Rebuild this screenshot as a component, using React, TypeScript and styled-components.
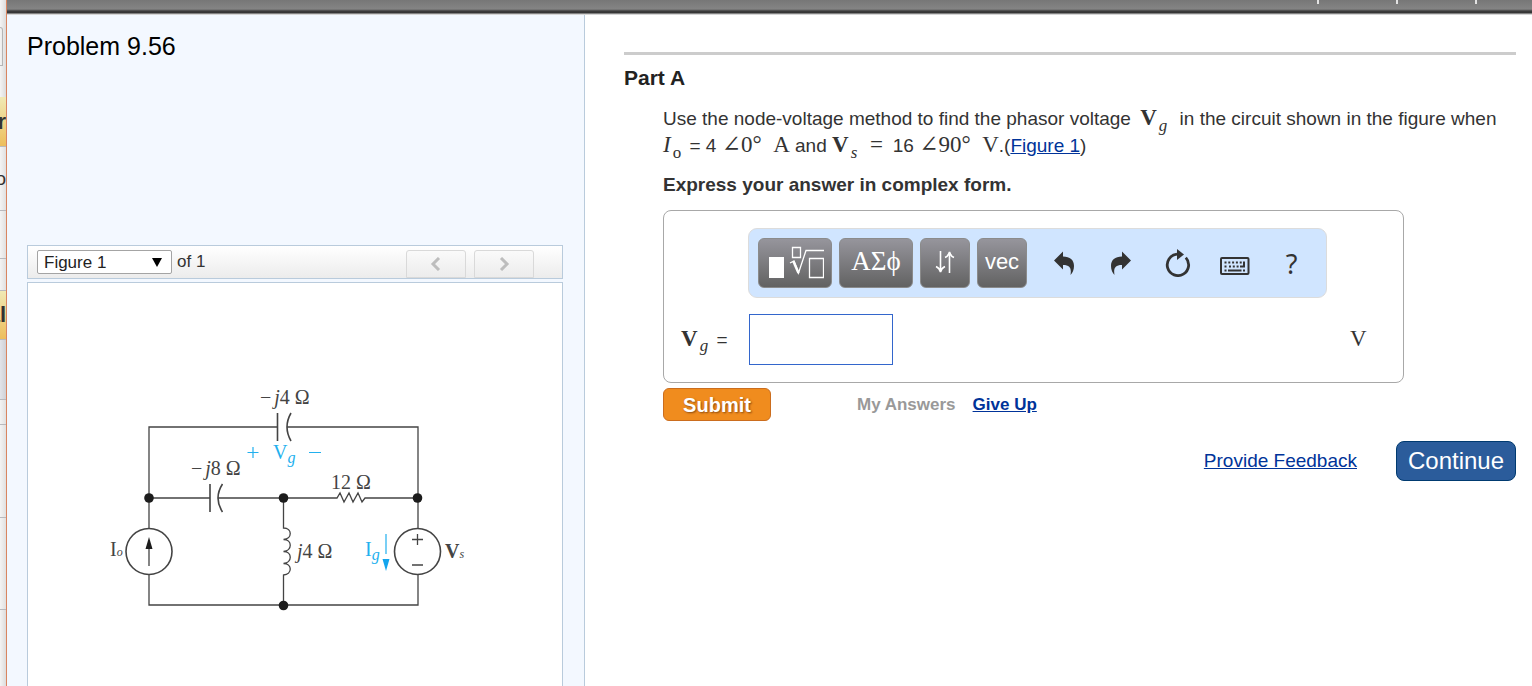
import React from 'react';
import styled, { createGlobalStyle, css } from 'styled-components';

const sans = '"Liberation Sans", Arial, sans-serif';
const serif = '"Liberation Serif", "Times New Roman", "DejaVu Serif", serif';

const GlobalStyle = createGlobalStyle`
  * { box-sizing: border-box; }
  body { margin: 0; background: #fff; color: #333; font-family: ${sans}; }
  button, input, select { font-family: inherit; margin: 0; padding: 0; }
`;

const Page = styled.div`
  display: flex;
  min-height: 100vh;
`;

/* sliver of the course menu that stays visible beside the item */
const MenuEdge = styled.aside`
  width: 7px;
  flex: none;
  display: flex;
  flex-direction: column;
  background: linear-gradient(90deg, #f4f4f4, #dcdcdc);
  border-right: 1px solid #d98560;
  overflow: hidden;
`;

const tones = {
  plain: 'linear-gradient(90deg, #f4f4f4, #e0e0e0)',
  gold: 'linear-gradient(#f0e9b4, #edbe5c)',
  blue: 'linear-gradient(90deg, #e2e4ea, #cfd1d6)',
};

const MenuCell = styled.div<{ $h: number; $tone?: keyof typeof tones; $bold?: boolean }>`
  height: ${p => p.$h}px;
  flex: none;
  display: flex;
  align-items: center;
  justify-content: flex-end;
  border-bottom: 1px solid #b9b9bd;
  background: ${p => tones[p.$tone || 'plain']};
  font-size: ${p => (p.$bold ? 22 : 19)}px;
  font-weight: ${p => (p.$bold ? 700 : 400)};
  white-space: nowrap;
`;

const MenuTab = styled.div`
  width: 3px;
  height: 39px;
  margin: 27px 0 31px;
  flex: none;
  border: solid #b5b5b5;
  border-width: 1px 1px 1px 0;
  border-top-right-radius: 4px;
`;

const Main = styled.div`
  flex: 1;
  min-width: 0;
  display: flex;
  flex-direction: column;
`;

const TopBar = styled.header`
  height: 15px;
  flex: none;
  display: flex;
  justify-content: flex-end;
  gap: 77px;
  padding-right: 55px;
  background: linear-gradient(#777 0, #848484 9px, #666 10px, #3c3c3c 11px, #333 13px, #cfcfcf 14px, #ddd 15px);
`;

const Tick = styled.span`
  width: 2px;
  height: 4px;
  background: #e2e2e2;
`;

const Columns = styled.div`
  flex: 1;
  display: flex;
`;

const FigurePane = styled.section`
  width: 578px;
  flex: none;
  display: flex;
  flex-direction: column;
  padding: 16px 21px 0 20px;
  background: #f3f8ff;
  border-right: 1px solid #b9cbdc;
`;

const Title = styled.h1`
  margin: 0 0 183px;
  font-size: 25px;
  line-height: 31px;
  font-weight: 400;
  color: #000;
`;

const FigureBar = styled.div`
  height: 34px;
  margin-bottom: 3px;
  display: flex;
  align-items: center;
  gap: 5px;
  padding: 0 28px 0 9px;
  border: 1px solid #b9cbdc;
  background: linear-gradient(#fff, #ececec);
  font-size: 17px;
`;

const SelectWrap = styled.span`
  position: relative;
  display: flex;
`;

const Select = styled.select`
  appearance: none;
  width: 135px;
  height: 24px;
  padding-left: 6px;
  border: 1px solid #a4a4a4;
  border-radius: 2px;
  background: #fff;
  color: #222;
  font-size: 17px;
`;

const Caret = styled.svg`
  position: absolute;
  right: 10px;
  top: 7px;
  pointer-events: none;
`;

const Pager = styled.div`
  display: flex;
  gap: 8px;
  margin-left: auto;
  align-self: flex-end;
`;

const PagerButton = styled.button`
  width: 60px;
  height: 28px;
  display: grid;
  place-items: center;
  border: 1px solid #d9d9d9;
  border-radius: 3px 3px 0 0;
  background: linear-gradient(#fafafa, #ececec);
`;

const FigureFrame = styled.div`
  flex: 1;
  padding: 102px 77px 0;
  border: 1px solid #b9cbdc;
  border-bottom: 0;
  background: #fff;
`;

const AnswerPane = styled.main`
  flex: 1;
  min-width: 0;
  padding: 37px 16px 0 39px;
`;

const PartTitle = styled.h2`
  margin: 0;
  padding-top: 10px;
  border-top: 3px solid #ccc;
  font-size: 21px;
  line-height: 25px;
  color: #222;
`;

const PartBody = styled.div`
  padding: 15px 0 0 39px;
`;

const Prompt = styled.p<{ $strong?: boolean }>`
  margin: 0 0 12px;
  font-size: 19px;
  line-height: 27px;
  font-weight: ${p => (p.$strong ? 700 : 400)};
`;

const Formula = styled.span<{ $italic?: boolean; $bold?: boolean; $spaced?: boolean }>`
  margin: 0 ${p => (p.$spaced ? 4 : 0)}px;
  font-family: ${serif};
  font-size: 23px;
  line-height: 20px;
  font-style: ${p => (p.$italic ? 'italic' : 'normal')};
  font-weight: ${p => (p.$bold ? 700 : 400)};
  white-space: nowrap;
`;

const Sub = styled.sub<{ $upright?: boolean }>`
  margin: 0 3px 0 2px;
  font-family: ${serif};
  font-size: 17px;
  line-height: 0;
  font-style: ${p => (p.$upright ? 'normal' : 'italic')};
  font-weight: 400;
`;

const Link = styled.a<{ $small?: boolean }>`
  color: #039;
  font-size: ${p => (p.$small ? 17 : 19)}px;
  font-weight: ${p => (p.$small ? 700 : 400)};
  text-decoration: underline;
`;

const AnswerBox = styled.form`
  max-width: 741px;
  padding: 17px;
  display: grid;
  grid-template-columns: 67px 1fr auto;
  row-gap: 16px;
  align-items: center;
  border: 1px solid #a8a8a8;
  border-radius: 8px;
`;

const Toolbar = styled.div`
  grid-column: 2;
  width: 579px;
  height: 70px;
  display: flex;
  align-items: center;
  gap: 7px;
  padding-left: 9px;
  border: 1px solid #dcdcdc;
  border-radius: 9px;
  background: #d0e5ff;
`;

const ToolButton = styled.button<{ $wide?: boolean; $serif?: boolean }>`
  width: ${p => (p.$wide ? 74 : 50)}px;
  height: 50px;
  padding-bottom: 3px;
  display: grid;
  place-items: center;
  border: 1px solid #8b8b8b;
  border-radius: 6px;
  background: linear-gradient(#96959c, #626262);
  color: #fff;
  font-family: ${p => (p.$serif ? serif : sans)};
  font-size: ${p => (p.$serif ? 27 : 22)}px;
`;

const IconGroup = styled.div`
  display: flex;
  margin-left: 1px;
`;

const IconButton = styled.button`
  width: 57px;
  height: 50px;
  display: grid;
  place-items: center;
  border: 0;
  background: none;
  color: #333;
  font-family: "Noto Sans", ${sans};
  font-size: 27px;
`;

const AnswerLabel = styled.label`
  grid-column: 1;
  font-size: 19px;
  white-space: nowrap;
`;

const AnswerInput = styled.input`
  width: 144px;
  height: 51px;
  margin-left: 1px;
  padding: 0 8px;
  border: 1px solid #36c;
  outline: none;
  font-size: 20px;
`;

const Unit = styled.span`
  width: 36px;
`;

const Actions = styled.div`
  display: flex;
  align-items: center;
  gap: 17px;
  margin: 5px 0 20px;
  color: #999;
  font-size: 17px;
  font-weight: 700;
`;

const buttonBase = css`
  border-radius: 6px;
  color: #fff;
  line-height: 24px;
`;

const SubmitButton = styled.button`
  ${buttonBase}
  width: 108px;
  height: 33px;
  margin-right: 69px;
  border: 1px solid #cb6d1e;
  background: #f08c1e;
  font-size: 20px;
  font-weight: 700;
  text-shadow: 1px 1px 2px #8a4a10;
`;

const Footer = styled.footer`
  display: flex;
  align-items: center;
  justify-content: flex-end;
  gap: 39px;
`;

const ContinueButton = styled.button`
  ${buttonBase}
  width: 120px;
  height: 40px;
  border: 1px solid #003a70;
  border-radius: 8px;
  background: #2b5c9b;
  font-size: 24px;
`;

const CircuitDrawing = styled.svg`
  display: block;
`;

const Chevron = ({ d }: { d: string }) => (
  <svg width="12" height="14" viewBox="0 0 12 14" fill="none" stroke="#bdbdbd" strokeWidth="3">
    <path d={d} />
  </svg>
);

const Circuit = () => (
  <CircuitDrawing width="365" height="230" viewBox="105 385 365 230" role="img" aria-label="Circuit diagram">
    <g fill="none" stroke="#444" strokeWidth="1.3">
      <path d="M277 427H149V529M149 575V605H418V575M418 529V427H287" />
      <path d="M149 498H210M218 498H283M283 498H335l2 0 3 -5 4 9 5 -9 4 9 5 -9 4 9 3 -4H418" />
      <path d="M283.500 498V528c9 0 9 11 0 11.500 9 0 9 11 0 12 9 0 9 11 0 12 9 0 9 11 0 11.500V605" />
      <path d="M277.500 413V441M210 484V512" strokeWidth="1.6" />
      <path d="M291 413Q283 427 291 441M222.500 484Q213.500 498 222.500 512" strokeWidth="1.6" />
      <circle cx="149" cy="551.500" r="23" strokeWidth="1.6" />
      <circle cx="417.500" cy="551.500" r="23" strokeWidth="1.6" />
      <path d="M149 566V547M412 539.500h11M417.500 534v11M412 565h11" />
    </g>
    <g fill="#1c1c1c">
      <circle cx="149" cy="498" r="4.800" />
      <circle cx="283.500" cy="498" r="4.800" />
      <circle cx="417.500" cy="498" r="4.800" />
      <circle cx="283.500" cy="605.500" r="4.800" />
      <path d="M149 537l3.500 12h-7z" />
    </g>
    <g stroke="#22b0ee" strokeWidth="1.200" fill="none">
      <path d="M247.500 452.500h11M253 447v11M309 452.500h12M386 534v20" />
      <path d="M386 571l-3.500-12h7z" fill="#12a5ee" stroke="none" />
    </g>
    <g fill="#444" fontFamily={serif} fontSize="20">
      <text x="260" y="404">−<tspan dx="3" fontStyle="italic">j</tspan>4 Ω</text>
      <text x="191" y="475">−<tspan dx="3" fontStyle="italic">j</tspan>8 Ω</text>
      <text x="331" y="489">12 Ω</text>
      <text x="297" y="558"><tspan fontStyle="italic">j</tspan>4 Ω</text>
      <text x="110" y="556">I<tspan fontStyle="italic" fontSize="12">o</tspan></text>
      <text x="445" y="558" fontWeight="700">V<tspan fontStyle="italic" fontWeight="400" fontSize="12">s</tspan></text>
    </g>
    <g fill="#22b0ee" fontFamily={serif} fontSize="20">
      <text x="273" y="459">V<tspan fontStyle="italic" fontSize="16" dy="4">g</tspan></text>
      <text x="365" y="556">I<tspan fontStyle="italic" fontSize="16" dy="4">g</tspan></text>
    </g>
  </CircuitDrawing>
);

const RootIcon = () => (
  <svg width="58" height="34" viewBox="0 0 58 34" fill="none" stroke="#fff">
    <path d="M3 12h15v21H3z" fill="#fff" stroke="none" />
    <path d="M26.500 2.500h8v10h-8zM43.500 13.500h14v19h-14z" strokeWidth="1.300" />
    <path d="M24 18l4-2 4.500 12L40 5.500H59" strokeWidth="1.300" />
    <path d="M27.500 16.500L32.500 28" strokeWidth="2.500" />
  </svg>
);

const ArrowsIcon = () => (
  <svg width="20" height="24" viewBox="0 0 20 24" fill="none" stroke="#fff" strokeWidth="1.600">
    <path d="M5.500 1V21M1 16.500Q4.500 18 5.500 22Q6.500 18 10 16.500M14.500 23V3M10 7.500Q13.500 6 14.500 2Q15.500 6 19 7.500" />
  </svg>
);

const TurnIcon = ({ redo }: { redo?: boolean }) => (
  <svg width="22" height="26" viewBox="0 0 22 26" fill="currentColor">
    <path
      transform={redo ? 'matrix(-1 0 0 1 22 0)' : undefined}
      d="M1 10.500L10 1.500V6.500C17 6.500 21 10 21 16C21 20 19.500 23 17.500 25C18.500 19 17.500 15 10 15V19.500Z"
    />
  </svg>
);

const ResetIcon = () => (
  <svg width="26" height="28" viewBox="0 0 26 28">
    <path d="M12 5.200A10.700 10.700 0 1 0 20.800 8.600" fill="none" stroke="currentColor" strokeWidth="2.800" />
    <path d="M12 0l7 5.500-7 5.500z" fill="currentColor" />
  </svg>
);

const KeyboardIcon = () => (
  <svg width="30" height="26" viewBox="0 0 30 26" fill="none" stroke="currentColor">
    <rect x="1" y="8" width="27.500" height="16" rx="1" strokeWidth="2" />
    <path d="M4.500 12.500h18M4.500 16.500h2.500M9 16.500h10M4.500 20.500h2M23 20.500h2" strokeWidth="2" strokeDasharray="2 1.800" />
    <path d="M8 20.500h13.500M20 16.500h4V11.500" strokeWidth="2" />
  </svg>
);

export default function App() {
  return (
    <Page>
      <GlobalStyle />
      <MenuEdge>
        <MenuTab />
        <MenuCell $h={50} $tone="gold" $bold>r</MenuCell>
        <MenuCell $h={64}>o</MenuCell>
        <MenuCell $h={48} />
        <MenuCell $h={32} />
        <MenuCell $h={49} $tone="gold" $bold>al</MenuCell>
        <MenuCell $h={60} $tone="blue" />
        <MenuCell $h={25} />
        <MenuCell $h={93} />
        <MenuCell $h={92} />
      </MenuEdge>
      <Main>
        <TopBar>
          <Tick />
          <Tick />
          <Tick />
        </TopBar>
        <Columns>
          <FigurePane>
            <Title>Problem 9.56</Title>
            <FigureBar>
              <SelectWrap>
                <Select aria-label="Figure">
                  <option>Figure 1</option>
                </Select>
                <Caret width="10" height="10" viewBox="0 0 10 10"><path d="M0 1h10L5 10z" fill="#000" /></Caret>
              </SelectWrap>
              <span>of 1</span>
              <Pager>
                <PagerButton aria-label="Previous figure"><Chevron d="M9 1L3 7l6 6" /></PagerButton>
                <PagerButton aria-label="Next figure"><Chevron d="M3 1l6 6-6 6" /></PagerButton>
              </Pager>
            </FigureBar>
            <FigureFrame>
              <Circuit />
            </FigureFrame>
          </FigurePane>
          <AnswerPane>
            <PartTitle>Part A</PartTitle>
            <PartBody>
              <Prompt>
                Use the node-voltage method to find the phasor voltage{' '}
                <Formula $bold $spaced>V<Sub>g</Sub></Formula> in the circuit shown in the figure when{' '}
                <br />
                <Formula $italic>I<Sub $upright>o</Sub></Formula> = 4 <Formula>∠0° &nbsp;A</Formula> and{' '}
                <Formula $bold>V<Sub>s</Sub></Formula><Formula $spaced> = </Formula>16 <Formula>∠90° &nbsp;V</Formula>.(<Link href="#figure-1">Figure 1</Link>)
              </Prompt>
              <Prompt $strong>Express your answer in complex form.</Prompt>
              <AnswerBox id="answer-form" onSubmit={e => e.preventDefault()}>
                <Toolbar role="toolbar">
                  <ToolButton type="button" $wide aria-label="Templates"><RootIcon /></ToolButton>
                  <ToolButton type="button" $wide $serif>ΑΣϕ</ToolButton>
                  <ToolButton type="button" aria-label="Arrows"><ArrowsIcon /></ToolButton>
                  <ToolButton type="button">vec</ToolButton>
                  <IconGroup>
                    <IconButton type="button" aria-label="Undo"><TurnIcon /></IconButton>
                    <IconButton type="button" aria-label="Redo"><TurnIcon redo /></IconButton>
                    <IconButton type="button" aria-label="Reset"><ResetIcon /></IconButton>
                    <IconButton type="button" aria-label="Keyboard shortcuts"><KeyboardIcon /></IconButton>
                    <IconButton type="button">?</IconButton>
                  </IconGroup>
                </Toolbar>
                <AnswerLabel htmlFor="answer"><Formula $bold>V<Sub>g</Sub></Formula> =</AnswerLabel>
                <AnswerInput id="answer" />
                <Unit><Formula>V</Formula></Unit>
              </AnswerBox>
              <Actions>
                <SubmitButton type="submit" form="answer-form">Submit</SubmitButton>
                <span>My Answers</span>
                <Link href="#give-up" $small>Give Up</Link>
              </Actions>
            </PartBody>
            <Footer>
              <Link href="#feedback">Provide Feedback</Link>
              <ContinueButton type="button">Continue</ContinueButton>
            </Footer>
          </AnswerPane>
        </Columns>
      </Main>
    </Page>
  );
}
